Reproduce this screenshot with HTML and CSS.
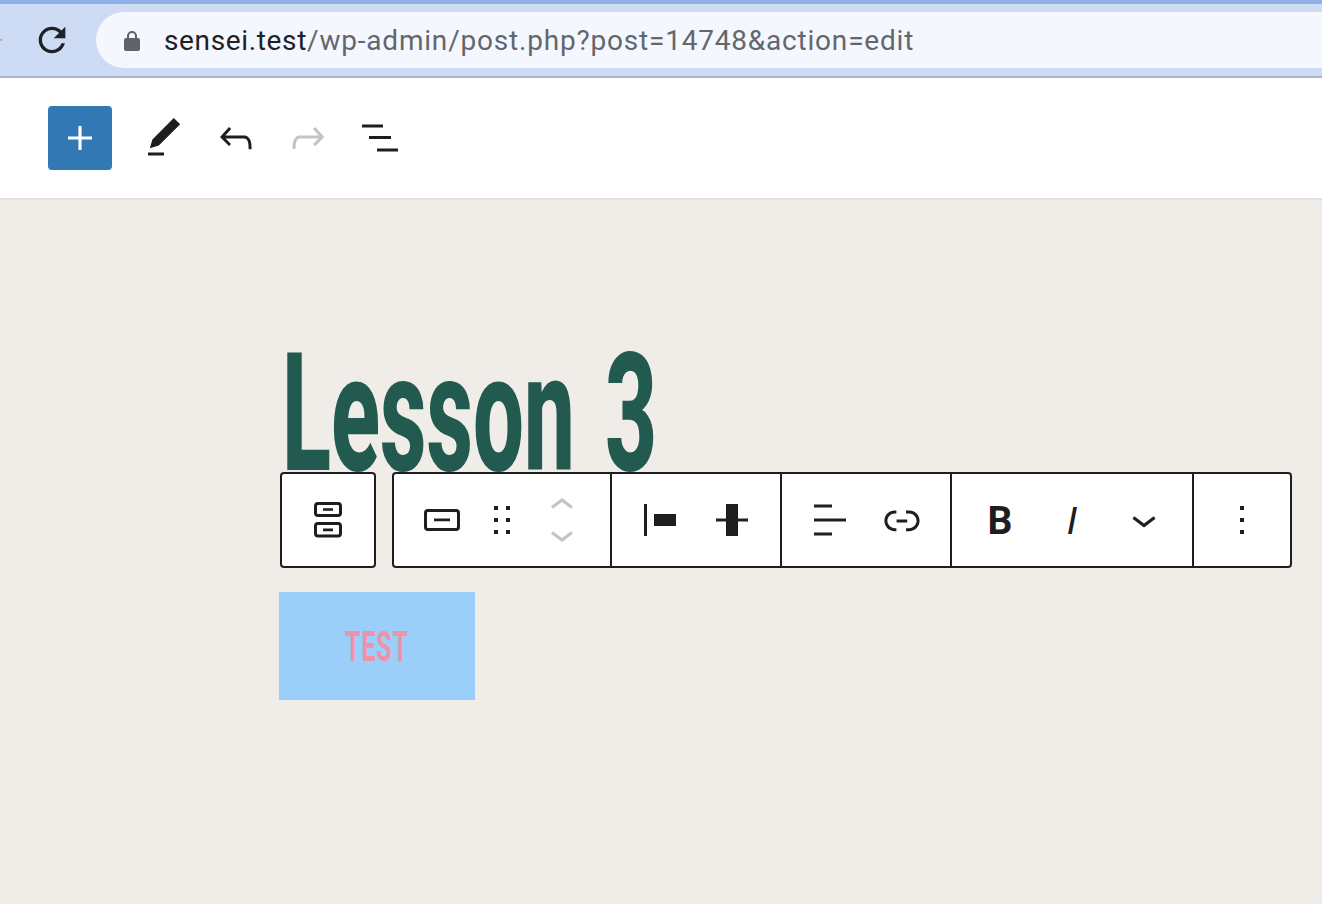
FILE: index.html
```html
<!DOCTYPE html>
<html lang="en">
<head>
<meta charset="utf-8">
<title>Lesson 3</title>
<link rel="stylesheet" href="styles.css">
</head>
<body>
<header class="browser">
  <svg class="nav-tick" viewBox="0 0 4 6"><path d="M0 2.2h2v1.4H0z"/></svg>
  <svg class="reload" viewBox="0 0 24 24"><path d="M17.65 6.35C16.2 4.9 14.21 4 12 4c-4.42 0-7.99 3.58-7.99 8s3.57 8 7.99 8c3.73 0 6.84-2.55 7.73-6h-2.08c-.82 2.33-3.04 4-5.65 4-3.31 0-6-2.69-6-6s2.69-6 6-6c1.66 0 3.14.69 4.22 1.78L13 11h7V4l-2.35 2.35z"/></svg>
  <div class="omnibox">
    <svg class="lock" viewBox="0 0 16 21"><path d="M3 9V6a5 5 0 0 1 10 0v3h-2V6a3 3 0 0 0-6 0v3z"/><rect y="8" width="16" height="13" rx="2"/></svg>
    <span class="url"><span class="host">sensei.test</span>/wp-admin/post.php?post=14748&amp;action=edit</span>
  </div>
</header>
<div class="editor-bar">
  <button class="inserter"><svg class="icon" viewBox="0 0 24 24"><path d="M18 11.2h-5.2V6h-1.6v5.2H6v1.6h5.2V18h1.6v-5.2H18z"/></svg></button>
  <span class="tool"><svg class="icon" viewBox="0 0 24 24"><path d="M20.1 5.1L16.9 2 6.2 12.7l-1.3 4.4 4.5-1.3L20.1 5.1zM4 20.8h8v-1.5H4v1.5z"/></svg></span>
  <span class="tool"><svg class="icon" viewBox="0 0 24 24"><path d="M18.3 11.7c-.6-.6-1.4-.9-2.3-.9H6.7l2.9-3.3-1.1-1-4.5 5L8.5 16l1-1-2.7-2.7H16c.5 0 .9.2 1.3.5 1 1 1 3.4 1 4.5v.3h1.5v-.2c0-1.5 0-4.3-1.5-5.7z"/></svg></span>
  <span class="tool off"><svg class="icon" viewBox="0 0 24 24"><path d="M15.6 6.5l-1.1 1 2.9 3.3H8c-.9 0-1.7.3-2.3.9-1.4 1.5-1.4 4.2-1.4 5.6v.2h1.5v-.3c0-1.1 0-3.5 1-4.5.3-.3.7-.5 1.3-.5h9.2L14.5 15l1.1 1.1 4.6-4.6-4.6-5z"/></svg></span>
  <span class="tool"><svg class="icon" viewBox="0 0 24 24"><path d="M3 5.2h10.500v1.500H3zM6.500 11h11v1.500h-11zM10.500 17.250H21v1.500H10.500z"/></svg></span>
</div>
<main class="canvas">
  <h1 class="title">Lesson 3</h1>
  <a class="test-button"><span class="test-label">TEST</span></a>
  <div class="block-toolbar">
    <div class="tb-box switcher">
      <svg class="icon" viewBox="0 0 24 24"><rect class="outline" x="5.750" y="3.750" width="12.500" height="6" rx="1.250"/><rect class="outline" x="5.750" y="13.750" width="12.500" height="6.250" rx="1.250"/><path d="M9.500 6.100h5v1.300h-5zM9.500 16.300h5v1.300h-5z"/></svg>
    </div>
    <div class="tb-box main">
      <div class="group first">
        <span class="btn"><svg class="icon" viewBox="0 0 24 24"><path fill-rule="evenodd" d="M5 6.500h14a2 2 0 0 1 2 2v7a2 2 0 0 1-2 2H5a2 2 0 0 1-2-2v-7a2 2 0 0 1 2-2zm0 1.500a.5.5 0 0 0-.5.5v7a.5.5 0 0 0 .5.5h14a.5.5 0 0 0 .5-.5v-7a.5.5 0 0 0-.5-.5zM8 11.300h8v1.300H8z"/></svg></span>
        <span class="btn drag"><svg class="icon" viewBox="0 0 24 24"><path d="M8 7h2V5H8v2zm0 6h2v-2H8v2zm0 6h2v-2H8v2zm6-14v2h2V5h-2zm0 8h2v-2h-2v2zm0 6h2v-2h-2v2z"/></svg></span>
        <span class="btn mover"><svg class="icon" viewBox="0 0 24 24"><path class="chev" d="M7 5.800 12 2l5 3.800M7 18.200l5 3.800 5-3.800"/></svg></span>
      </div>
      <div class="group">
        <span class="btn"><svg class="icon" viewBox="0 0 24 24"><path d="M4 4h1.500v16H4zM9 9h11v6H9z"/></svg></span>
        <span class="btn"><svg class="icon" viewBox="0 0 24 24"><path d="M9 4h6v7.250h5v1.500h-5V20H9v-7.250H4v-1.500h5z"/></svg></span>
      </div>
      <div class="group">
        <span class="btn"><svg class="icon" viewBox="0 0 24 24"><path d="M4 4.250h9v1.500H4zM4 11.250h16v1.500H4zM4 18.250h9v1.500H4z"/></svg></span>
        <span class="btn"><svg class="icon" viewBox="0 0 24 24"><path d="M15.600 7.200H14v1.500h1.600c2 0 3.700 1.700 3.700 3.700s-1.700 3.700-3.700 3.700H14v1.500h1.600c2.800 0 5.200-2.300 5.200-5.200 0-2.900-2.300-5.200-5.200-5.200zM4.700 12.400c0-2 1.700-3.700 3.700-3.700h.8V7.200h-.8c-2.900 0-5.200 2.300-5.200 5.200 0 2.900 2.300 5.200 5.200 5.200h.8v-1.500h-.8c-2 0-3.700-1.700-3.700-3.700zm4.600.9h5.300v-1.500H9.300v1.500z"/></svg></span>
      </div>
      <div class="group">
        <span class="btn fmt bold">B</span>
        <span class="btn fmt italic">I</span>
        <span class="btn"><svg class="icon" viewBox="0 0 24 24"><path class="line" d="M6.700 10.750l5.300 4 5.300-4"/></svg></span>
      </div>
      <div class="group last">
        <span class="btn"><svg class="icon" viewBox="0 0 24 24"><path d="M11 5h2v2h-2zM11 11h2v2h-2zM11 17h2v2h-2z"/></svg></span>
      </div>
    </div>
  </div>
</main>
</body>
</html>
```

FILE: styles.css
```css
* { box-sizing: border-box; }
html, body { margin: 0; height: 100%; overflow: hidden; }
body {
  width: 1322px;
  height: 904px;
  display: flex;
  flex-direction: column;
  background: #f0ede8;
  font-family: "Liberation Sans", sans-serif;
  color: #1e1e1e;
}
.browser {
  height: 78px;
  flex: none;
  display: flex;
  align-items: center;
  background: #cddbf5;
  border-top: 4px solid #8fb0e6;
  border-bottom: 2px solid #a9b5cf;
}
.nav-tick { width: 4px; height: 6px; fill: #8a8f99; flex: none; }
.reload {
  width: 40px;
  height: 40px;
  fill: #202124;
  flex: none;
  margin: -1px 0 0 28px;
}
.omnibox {
  flex: 1;
  height: 56px;
  margin-left: 24px;
  display: flex;
  align-items: center;
  background: #f4f8fe;
  border-radius: 28px 0 0 28px;
  padding-left: 28px;
}
.lock { width: 16px; height: 21px; fill: #5f6368; flex: none; }
.url {
  margin-left: 24px;
  font-family: Roboto, sans-serif;
  font-size: 28px;
  letter-spacing: 0.8px;
  color: #63676c;
  white-space: nowrap;
}
.host { color: #202124; letter-spacing: 0.65px; }
.editor-bar {
  height: 122px;
  flex: none;
  display: flex;
  align-items: center;
  background: #fff;
  border-bottom: 2px solid #e0e0e0;
  padding-left: 48px;
}
.inserter {
  width: 64px;
  height: 64px;
  padding: 0;
  border: 0;
  border-radius: 4px;
  background: #3278b5;
  display: flex;
  align-items: center;
  justify-content: center;
  margin-right: 16px;
}
.icon { width: 48px; height: 48px; display: block; fill: currentColor; }
.tool { width: 72px; display: flex; justify-content: center; color: #1e1e1e; }
.tool.off { color: #c4c4c4; }
.inserter .icon { fill: #fff; }
.canvas {
  flex: 1;
  position: relative;
  padding-left: 282px;
  padding-top: 129px;
}
.title {
  margin: 0;
  font-family: Roboto, sans-serif;
  font-weight: 800;
  font-size: 166px;
  line-height: 170px;
  word-spacing: 14px;
  color: #235a50;
  white-space: nowrap;
  transform: scaleX(0.545);
  transform-origin: 0 50%;
}
.test-button {
  display: flex;
  align-items: center;
  justify-content: center;
  width: 196px;
  height: 108px;
  margin: 93px 0 0 -3px;
  background: #9ccefa;
}
.test-label {
  color: #ec93a8;
  font-family: Roboto, sans-serif;
  font-weight: 700;
  font-size: 43px;
  letter-spacing: 1.5px;
  transform: scaleX(0.58);
}
.block-toolbar {
  position: absolute;
  left: 280px;
  top: 272px;
  display: flex;
  gap: 16px;
}
.tb-box {
  height: 96px;
  background: #fff;
  border: 2px solid #1e1e1e;
  border-radius: 4px;
  display: flex;
}
.switcher { width: 96px; align-items: center; justify-content: center; }
.main { width: 900px; }
.group {
  display: flex;
  align-items: center;
  padding: 0 12px;
  border-right: 2px solid #1e1e1e;
}
.group.last { border-right: 0; }
.btn { width: 72px; height: 48px; display: flex; align-items: center; justify-content: center; }
.btn.drag { width: 48px; }
.mover { color: #c4c4c4; }
.chev, .line { fill: none; stroke: currentColor; stroke-width: 1.6; }
.outline { fill: none; stroke: currentColor; stroke-width: 1.500; }
.fmt { font-size: 39px; line-height: 48px; color: #1e1e1e; padding-top: 1px; }
.bold { font-family: Roboto, sans-serif; font-weight: 700; }
.italic { font-family: "Liberation Sans", sans-serif; font-style: italic; }
```
